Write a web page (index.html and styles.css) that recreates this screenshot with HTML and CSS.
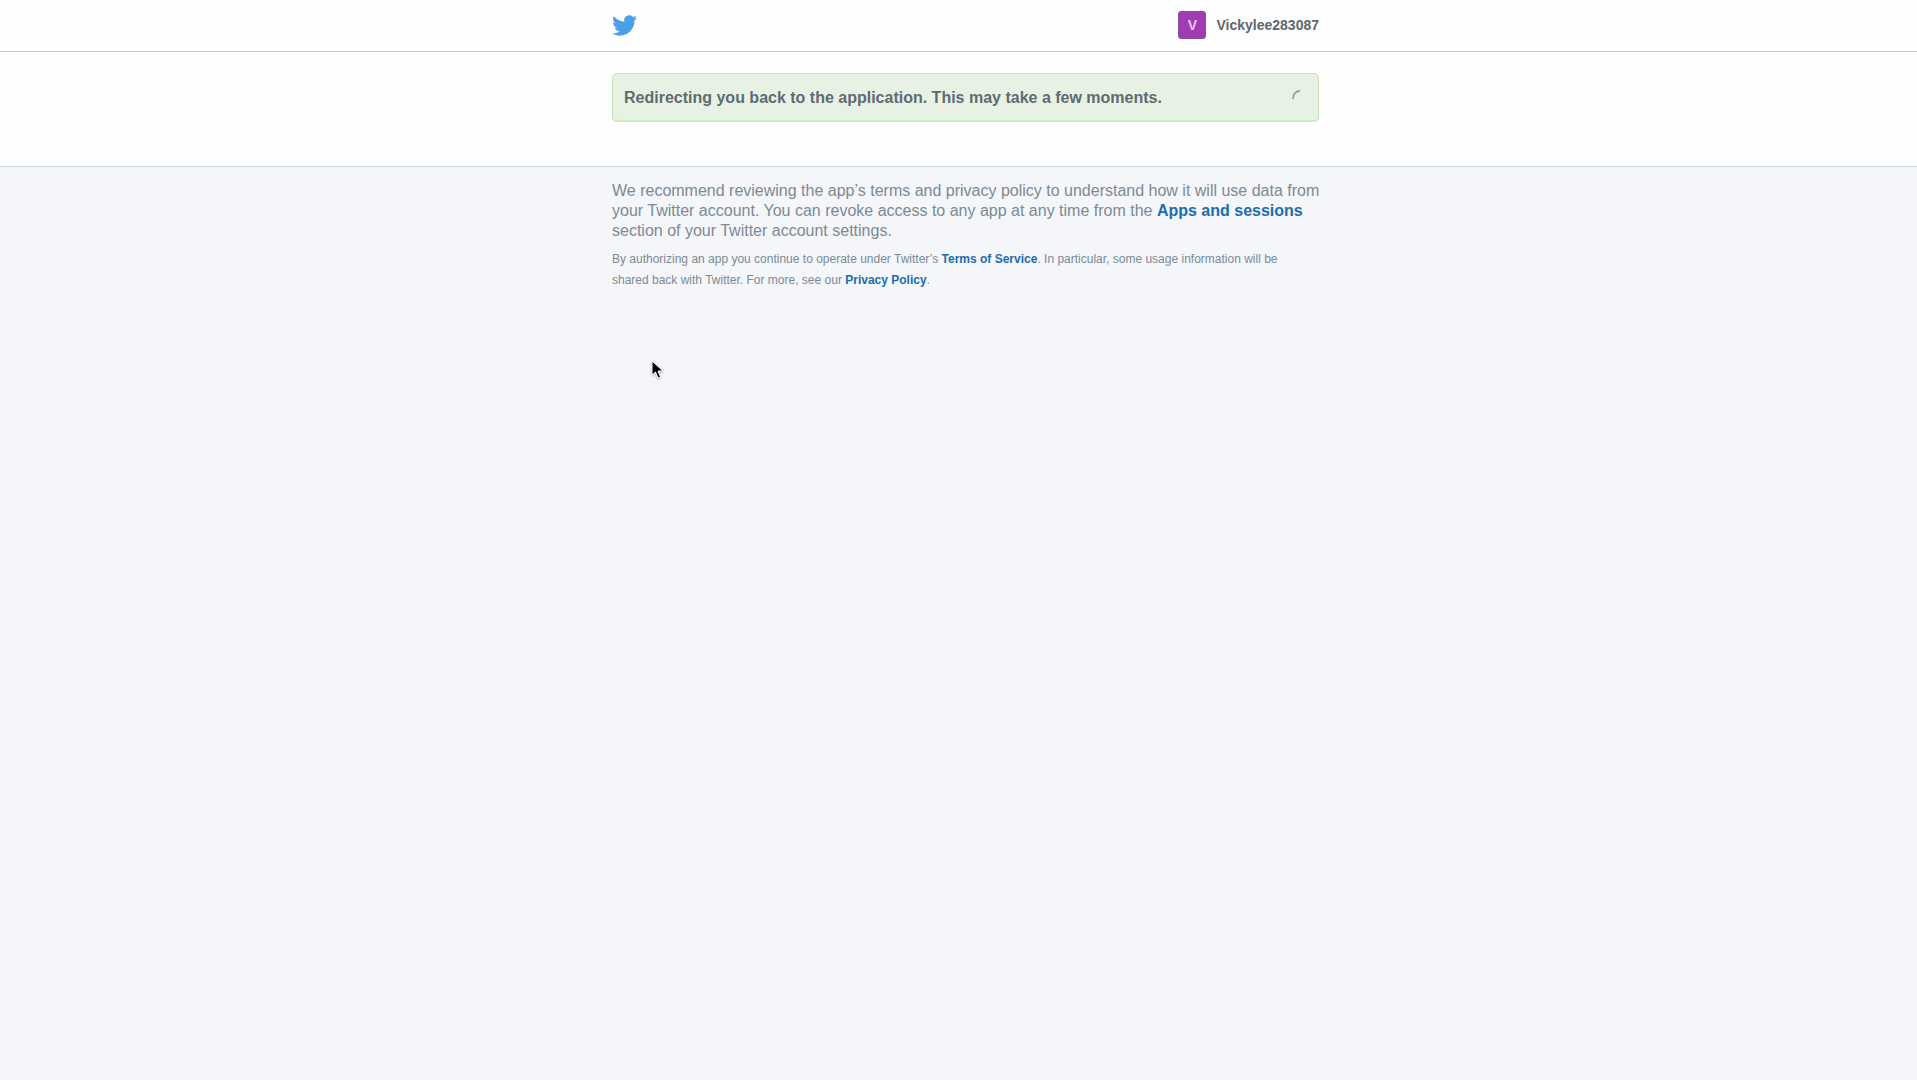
FILE: index.html
```
<!DOCTYPE html>
<html lang="en">
<head>
  <meta charset="UTF-8">
  <meta name="viewport" content="width=device-width, initial-scale=1.0">
  <title>Twitter / Authorize an application</title>
  <link rel="stylesheet" href="styles.css">
</head>
<body>
  <header class="topbar">
    <div class="wrap topbar-inner">
      <a class="logo" href="#" aria-label="Twitter">
        <svg viewBox="0 0 24 24" width="25" height="25" aria-hidden="true">
          <path d="M23.954 4.569c-.885.389-1.83.654-2.825.775 1.014-.611 1.794-1.574 2.163-2.723-.951.555-2.005.959-3.127 1.184-.896-.959-2.173-1.559-3.591-1.559-2.717 0-4.92 2.203-4.92 4.917 0 .39.045.765.127 1.124C7.691 8.094 4.066 6.13 1.64 3.161c-.427.722-.666 1.561-.666 2.475 0 1.71.87 3.213 2.188 4.096-.807-.026-1.566-.248-2.228-.616v.061c0 2.385 1.693 4.374 3.946 4.827-.413.111-.849.171-1.296.171-.314 0-.615-.03-.916-.086.631 1.953 2.445 3.377 4.604 3.417-1.68 1.319-3.809 2.105-6.102 2.105-.39 0-.779-.023-1.17-.067 2.189 1.394 4.768 2.209 7.557 2.209 9.054 0 13.999-7.496 13.999-13.986 0-.209 0-.42-.015-.63.961-.689 1.8-1.56 2.46-2.548l-.047-.02z"/>
        </svg>
      </a>
      <a class="account" href="#">
        <span class="avatar" aria-hidden="true">V</span>
        <span class="name">Vickylee283087</span>
      </a>
    </div>
  </header>

  <main class="auth">
    <div class="wrap">
      <div class="notice" role="status">
        <p>Redirecting you back to the application. This may take a few moments.</p>
        <svg class="spinner" viewBox="0 0 16 16" width="16" height="16" aria-hidden="true">
          <path d="M1 9C1 4 4 1 8 1"/>
        </svg>
      </div>
    </div>
  </main>

  <footer class="footer">
    <div class="wrap">
      <p class="tip">We recommend reviewing the app’s terms and privacy policy to understand how it will use data from<br>
        your Twitter account. You can revoke access to any app at any time from the <a href="#">Apps and sessions</a><br>
        section of your Twitter account settings.</p>
      <p class="legal">By authorizing an app you continue to operate under Twitter’s <a href="#">Terms of Service</a>. In particular, some usage information will be<br>
        shared back with Twitter. For more, see our <a href="#">Privacy Policy</a>.</p>
    </div>
  </footer>

  <svg class="cursor" viewBox="0 0 14 20" width="14" height="20" aria-hidden="true">
    <path d="M1 1V15L4.500 12L7 18L9.500 17L7 11H12Z"/>
  </svg>
</body>
</html>
```
FILE: styles.css
```
* {
  box-sizing: border-box;
}
body {
  margin: 0;
  min-height: 100vh;
  background: #f4f6fa;
  font-family: "Liberation Sans", Arial, sans-serif;
  font-size: 16px;
  line-height: 20px;
  color: #7b8a94;
}
p {
  margin: 0;
}
a {
  color: #1b6cb0;
  font-weight: bold;
  text-decoration: none;
}
a:hover {
  text-decoration: underline;
}
.topbar,
.auth,
.footer {
  padding-left: 14px;
}
.wrap {
  max-width: 707px;
  margin: 0 auto;
}
.topbar {
  background: #fefefe;
  border-bottom: 1px solid #c6cbd2;
}
.topbar-inner {
  display: flex;
  align-items: center;
  justify-content: space-between;
  height: 51px;
  padding-bottom: 1px;
}
.logo {
  display: flex;
}
.logo svg {
  fill: #4a9fe8;
}
.account {
  display: flex;
  align-items: center;
  gap: 10px;
  font-size: 14px;
  color: #5b676f;
}
.avatar {
  width: 28px;
  height: 28px;
  border: 1px solid #80549a;
  border-radius: 3px;
  background: #a03bb3;
  color: #e9c9ef;
  line-height: 26px;
  text-align: center;
}
.auth {
  background: #fefefe;
  padding-top: 21px;
  padding-bottom: 44px;
  border-bottom: 1px solid #c6d3de;
}
.notice {
  display: flex;
  align-items: center;
  justify-content: space-between;
  padding: 14px 10px 12px 11px;
  border: 1px solid #c5e3b5;
  border-bottom: 2px solid #cdeabc;
  border-radius: 5px;
  background: #e8f2e4;
  color: #5f6b72;
  font-weight: bold;
}
.spinner {
  fill: none;
  stroke: #98a39f;
  stroke-width: 2;
}
.footer {
  padding-top: 14px;
}
.tip {
  margin-right: -8px;
}
.legal {
  margin-top: 8px;
  font-size: 12px;
  line-height: 21px;
}
.cursor {
  position: absolute;
  top: 360px;
  left: 651px;
  fill: #000;
  stroke: #fff;
  stroke-width: 1;
  filter: drop-shadow(0 1px 1px rgba(0, 0, 0, 0.3));
}
```
